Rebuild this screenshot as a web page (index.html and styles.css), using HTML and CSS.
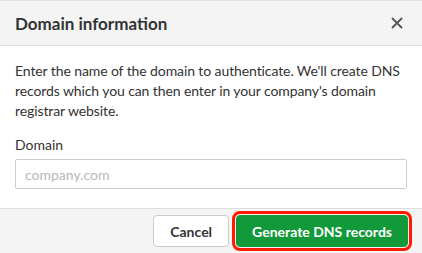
FILE: index.html
```html
<!DOCTYPE html>
<html lang="en">
<head>
  <meta charset="UTF-8">
  <meta name="viewport" content="width=device-width, initial-scale=1.0">
  <title>Domain information</title>
  <link rel="stylesheet" href="styles.css">
</head>
<body>
  <div class="modal">
    <div class="modal-header">
      <h1>Domain information</h1>
      <button class="close" aria-label="Close">
        <svg width="12" height="12" viewBox="0 0 12 12">
          <path d="M1.5 1.5 L10.5 10.5 M10.5 1.5 L1.5 10.5" stroke="#555" stroke-width="1.8" stroke-linecap="round"/>
        </svg>
      </button>
    </div>
    <div class="modal-body">
      <p>Enter the name of the domain to authenticate. We'll create DNS records which you can then enter in your company's domain registrar website.</p>
      <label for="domain">Domain</label>
      <input type="text" id="domain" class="input" placeholder="company.com">
    </div>
    <div class="modal-footer">
      <button class="btn">Cancel</button>
      <button class="btn btn-primary">Generate DNS records</button>
    </div>
  </div>
</body>
</html>
```

FILE: styles.css
```css
body {
  font-family: 'Lato', 'Noto Sans', sans-serif;
  margin: 0;
  padding: 0;
  background-color: #fff;
  color: #333;
  overflow: hidden;
}

.modal {
  width: 422px;
  height: 253px;
  display: flex;
  flex-direction: column;
  background-color: #fff;
}

.modal-header {
  height: 46px;
  padding: 0 15px;
  background-color: #f4f4f4;
  border-top: 1px solid #e4e4e4;
  border-bottom: 1px solid #dedede;
  display: flex;
  justify-content: space-between;
  align-items: center;
  box-sizing: border-box;
}

.modal-header h1 {
  margin: 0;
  font-size: 17px;
  font-weight: 700;
  color: #333;
}

.close {
  background: none;
  border: none;
  padding: 0;
  width: 20px;
  height: 20px;
  display: flex;
  align-items: center;
  justify-content: center;
  cursor: pointer;
}

.modal-body {
  padding: 15px 15px 17px;
  flex: 1;
}

.modal-body p {
  margin: 0 0 14px;
  font-size: 14px;
  letter-spacing: -0.1px;
  line-height: 20px;
}

.modal-body label {
  display: block;
  font-size: 14px;
  line-height: 20px;
  margin-bottom: 4px;
}

.input {
  width: 100%;
  height: 30px;
  box-sizing: border-box;
  border: 1px solid #ccc;
  border-radius: 2px;
  padding: 0 9px;
  font-family: inherit;
  font-size: 14px;
  color: #333;
}

.input::placeholder {
  color: #b8b8b8;
}

.modal-footer {
  height: 45px;
  box-sizing: border-box;
  background-color: #f4f4f4;
  border-top: 1px solid #dedede;
  display: flex;
  justify-content: flex-end;
  align-items: center;
  gap: 7px;
  padding: 0 14px;
}

.btn {
  height: 32px;
  padding: 0 16px;
  font-family: inherit;
  font-size: 14px;
  font-weight: 700;
  color: #333;
  background-color: #fff;
  border: 1px solid #ccc;
  border-radius: 4px;
  cursor: pointer;
}

.btn-primary {
  background-color: #129a3a;
  border-color: #129a3a;
  color: #fff;
  padding: 0 15px;
  outline: 3px solid #ff1a00;
  outline-offset: 1px;
}
```
